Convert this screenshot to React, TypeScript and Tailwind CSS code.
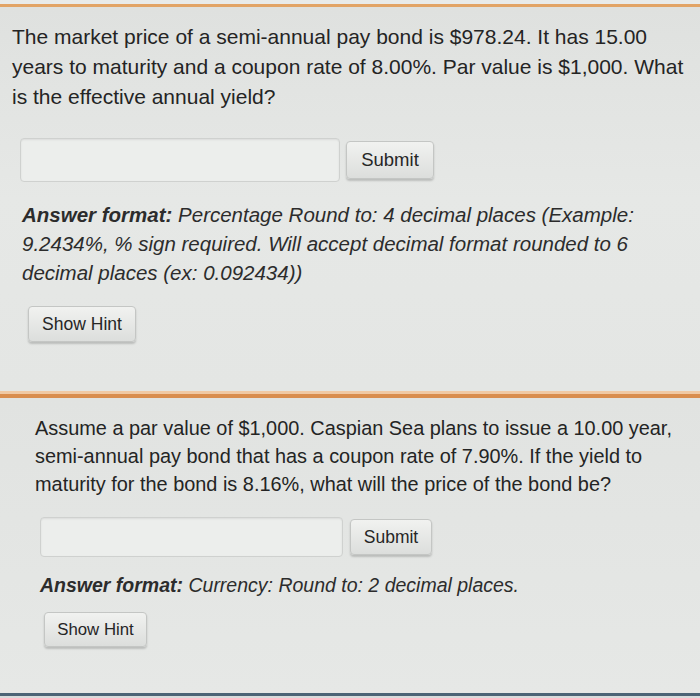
import React from "react";

const font = { fontFamily: '"Liberation Sans", Arial, sans-serif' };

function Btn({ label, className }: { label: string; className: string }) {
  return (
    <button
      className={`rounded-[4px] border border-[#c4c6c4] bg-gradient-to-b from-[#f1f2f0] to-[#dcdedc] text-[#262626] shadow-[0_2px_2px_rgba(0,0,0,0.18)] ${className}`}
    >
      {label}
    </button>
  );
}

function Question({
  pad,
  lines,
  textClass,
  inputClass,
  submitClass,
  formatLines,
  formatClass,
  hintClass,
}: {
  pad: string;
  lines: string[];
  textClass: string;
  inputClass: string;
  submitClass: string;
  formatLines: string[];
  formatClass: string;
  hintClass: string;
}) {
  return (
    <div className={`flex flex-col items-start ${pad}`}>
      <p className={`whitespace-nowrap text-[#242424] ${textClass}`}>
        {lines.map((l, i) => (
          <span key={i} className="block">
            {l}
          </span>
        ))}
      </p>
      <div className="flex items-center">
        <div
          className={`rounded-[4px] border border-[#cfd1cf] bg-[#eceeec] shadow-[inset_0_1px_2px_rgba(0,0,0,0.08)] ${inputClass}`}
        />
        <Btn label="Submit" className={submitClass} />
      </div>
      <p className={`whitespace-nowrap text-[#2c2c2c] italic ${formatClass}`}>
        {formatLines.map((l, i) => (
          <span key={i} className="block">
            {i === 0 && <b>Answer format:</b>}
            {l}
          </span>
        ))}
      </p>
      <Btn label="Show Hint" className={hintClass} />
    </div>
  );
}

export default function App() {
  return (
    <div style={font} className="h-[698px] w-[700px] overflow-hidden bg-[#e3e5e3]">
      <div className="h-[4px] bg-[#e9ebea]" />
      <div className="h-[3px] bg-[#e2a466]" />
      <div className="h-[384px] bg-gradient-to-b from-[#dfe1df] via-[#e6e8e6] to-[#e4e6e4]">
        <Question
          pad="pl-[12px] pt-[15px]"
          lines={[
            "The market price of a semi-annual pay bond is $978.24. It has 15.00",
            "years to maturity and a coupon rate of 8.00%. Par value is $1,000. What",
            "is the effective annual yield?",
          ]}
          textClass="text-[21px] leading-[30px]"
          inputClass="ml-[8px] mt-[26px] h-[44px] w-[320px]"
          submitClass="ml-[6px] mt-[26px] h-[38px] w-[88px] text-[18.5px]"
          formatLines={[
            " Percentage Round to: 4 decimal places (Example:",
            "9.2434%, % sign required. Will accept decimal format rounded to 6",
            "decimal places (ex: 0.092434))",
          ]}
          formatClass="ml-[10px] mt-[18px] text-[20.5px] leading-[29px]"
          hintClass="ml-[16px] mt-[19px] h-[36px] w-[108px] text-[17.5px]"
        />
      </div>
      <div className="h-[3px] bg-[#f0c9a4]" />
      <div className="h-[4px] bg-[#d98d4e]" />
      <div className="h-[295px] bg-gradient-to-b from-[#e1e3e1] to-[#e6e8e6]">
        <Question
          pad="pl-[35px] pt-[16px]"
          lines={[
            "Assume a par value of $1,000. Caspian Sea plans to issue a 10.00 year,",
            "semi-annual pay bond that has a coupon rate of 7.90%. If the yield to",
            "maturity for the bond is 8.16%, what will the price of the bond be?",
          ]}
          textClass="text-[19.9px] leading-[28px]"
          inputClass="ml-[5px] mt-[19px] h-[40px] w-[303px]"
          submitClass="ml-[7px] mt-[19px] h-[36px] w-[82px] text-[17.5px]"
          formatLines={[" Currency: Round to: 2 decimal places."]}
          formatClass="ml-[5px] mt-[14px] text-[19.5px] leading-[28px]"
          hintClass="ml-[9px] mt-[13px] h-[35px] w-[103px] text-[16.8px]"
        />
      </div>
      <div className="h-[3px] bg-[#4c6476]" />
      <div className="h-[5px] bg-[#d8dcdc]" />
    </div>
  );
}
